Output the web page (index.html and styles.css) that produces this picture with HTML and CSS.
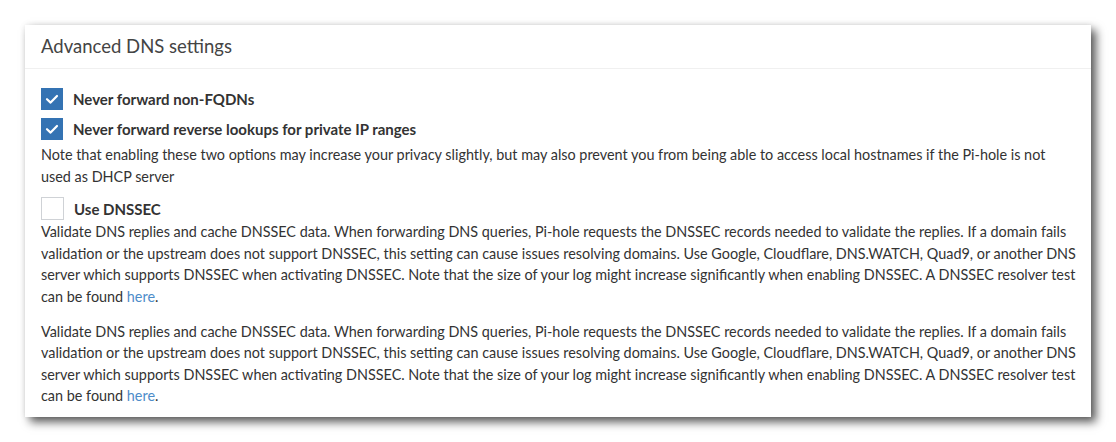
FILE: index.html
```html
<!DOCTYPE html>
<html>
<head>
<meta charset="utf-8">
<link rel="stylesheet" href="styles.css">
</head>
<body>
<div class="page">
  <div class="card">
    <div class="card-header">
      <h3 class="card-title">Advanced DNS settings</h3>
    </div>
    <div class="card-body">
      <div class="check-row">
        <span class="box checked"><svg viewBox="0 0 22 22" width="22" height="22"><path d="M6 11.2 L9.6 14.6 L16 8" fill="none" stroke="#fff" stroke-width="2.2" stroke-linecap="round" stroke-linejoin="round"/></svg></span>
        <span class="label">Never forward non-FQDNs</span>
      </div>
      <div class="check-row">
        <span class="box checked"><svg viewBox="0 0 22 22" width="22" height="22"><path d="M6 11.2 L9.6 14.6 L16 8" fill="none" stroke="#fff" stroke-width="2.2" stroke-linecap="round" stroke-linejoin="round"/></svg></span>
        <span class="label">Never forward reverse lookups for private IP ranges</span>
      </div>
      <p class="note first">Note that enabling these two options may increase your privacy slightly, but may also prevent you from being able to access local hostnames if the Pi-hole is not used as DHCP server</p>
      <div class="check-row dnssec">
        <span class="box"></span>
        <span class="label">Use DNSSEC</span>
      </div>
      <p class="note">Validate DNS replies and cache DNSSEC data. When forwarding DNS queries, Pi-hole requests the DNSSEC records needed to validate the replies. If a domain fails validation or the upstream does not support DNSSEC, this setting can cause issues resolving domains. Use Google, Cloudflare, DNS.WATCH, Quad9, or another DNS server which supports DNSSEC when activating DNSSEC. Note that the size of your log might increase significantly when enabling DNSSEC. A DNSSEC resolver test can be found <a href="#">here</a>.</p>
      <p class="note second">Validate DNS replies and cache DNSSEC data. When forwarding DNS queries, Pi-hole requests the DNSSEC records needed to validate the replies. If a domain fails validation or the upstream does not support DNSSEC, this setting can cause issues resolving domains. Use Google, Cloudflare, DNS.WATCH, Quad9, or another DNS server which supports DNSSEC when activating DNSSEC. Note that the size of your log might increase significantly when enabling DNSSEC. A DNSSEC resolver test can be found <a href="#">here</a>.</p>
    </div>
  </div>
</div>
</body>
</html>
```
FILE: styles.css
```css
html, body {
  margin: 0;
  padding: 0;
  background: #fff;
}
body {
  font-family: "Source Sans Pro", Lato, "Liberation Sans", sans-serif;
  font-size: 14.4px;
  color: #333;
}
.page {
  padding: 25px 25px 25px 25px;
}
.card {
  width: 1066px;
  height: 392px;
  box-sizing: border-box;
  background: #fff;
  box-shadow: 5px 5px 9px rgba(0, 0, 0, 0.65), 0 0 6px rgba(0, 0, 0, 0.08);
}
.card-header {
  height: 44px;
  box-sizing: border-box;
  border-bottom: 1px solid #f0f0f0;
  padding: 9px 16px 11px;
}
.card-title {
  margin: 0;
  font-size: 18.5px;
  font-weight: 400;
  line-height: 24px;
  color: #444;
}
.card-body {
  padding: 19px 9px 10px 16px;
}
.check-row {
  display: flex;
  align-items: center;
  gap: 10px;
  height: 22px;
  margin-bottom: 8px;
}
.box {
  width: 22px;
  height: 22px;
  box-sizing: border-box;
  border: 1px solid #cfd2d6;
  display: flex;
  flex: none;
}
.box.checked {
  background: #3473b3;
  border-color: #3473b3;
}
.box svg {
  display: block;
  margin: -1px;
}
.label {
  font-weight: 700;
  font-size: 15px;
}
.note {
  margin: 0;
  line-height: 21.6px;
}
.note.first {
  margin-top: -4px;
  max-width: 1020px;
}
.check-row.dnssec {
  height: 23px;
  margin-top: 10px;
  margin-bottom: 1px;
}
.check-row.dnssec .box {
  height: 23px;
  width: 23px;
}
.note.second {
  margin-top: 13px;
}
a {
  color: #4d8cc9;
  text-decoration: none;
}
```
